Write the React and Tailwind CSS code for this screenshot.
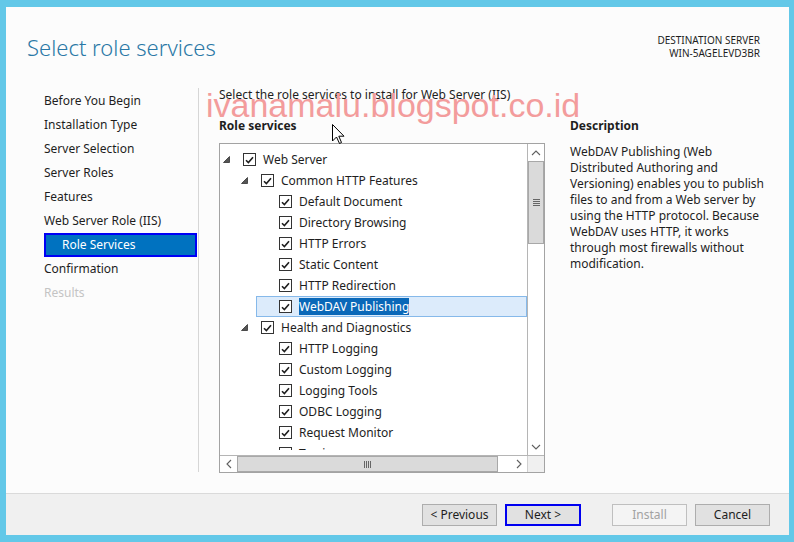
import React from "react"

const font = "font-['Segoe_UI','Noto_Sans',sans-serif]"

const navItems = [
  "Before You Begin",
  "Installation Type",
  "Server Selection",
  "Server Roles",
  "Features",
  "Web Server Role (IIS)",
  "Role Services",
  "Confirmation",
  "Results",
]

const treeRows = [
  { level: 0, label: "Web Server", expander: true },
  { level: 1, label: "Common HTTP Features", expander: true },
  { level: 2, label: "Default Document" },
  { level: 2, label: "Directory Browsing" },
  { level: 2, label: "HTTP Errors" },
  { level: 2, label: "Static Content" },
  { level: 2, label: "HTTP Redirection" },
  { level: 2, label: "WebDAV Publishing", selected: true },
  { level: 1, label: "Health and Diagnostics", expander: true },
  { level: 2, label: "HTTP Logging" },
  { level: 2, label: "Custom Logging" },
  { level: 2, label: "Logging Tools" },
  { level: 2, label: "ODBC Logging" },
  { level: 2, label: "Request Monitor" },
  { level: 2, label: "Tracing" },
]

const indent = ["ml-0", "ml-[18px]", "ml-[36px]"]

function Check() {
  return (
    <span className="w-[13px] h-[13px] border border-[#333] bg-white flex items-center justify-center shrink-0">
      <svg width="9" height="8" viewBox="0 0 9 8">
        <path d="M1 4.2 L3.4 6.6 L8 1.2" stroke="#1e1e1e" strokeWidth="1.6" fill="none" />
      </svg>
    </span>
  )
}

function Expander() {
  return (
    <svg width="7" height="7" viewBox="0 0 7 7">
      <path d="M6.5 0.5 L6.5 6.5 L0.5 6.5 Z" fill="#555" stroke="#333" strokeWidth="0.8" />
    </svg>
  )
}

function Chevron({ dir }) {
  const d = {
    up: "M1 6 L5 2 L9 6",
    down: "M1 2 L5 6 L9 2",
    left: "M6 1 L2 5 L6 9",
    right: "M2 1 L6 5 L2 9",
  }[dir]
  const vertical = dir === "up" || dir === "down"
  return (
    <svg width={vertical ? 10 : 8} height={vertical ? 8 : 10} viewBox={vertical ? "0 0 10 8" : "0 0 8 10"}>
      <path d={d} stroke="#606060" strokeWidth="1.1" fill="none" />
    </svg>
  )
}

function TreeRow({ row }) {
  return (
    <div
      className={`h-[21px] flex items-center border ${indent[row.level]} ${
        row.selected ? "border-[#86b9ea] bg-[#dcebfb]" : "border-transparent"
      }`}
    >
      <span className="w-[22px] pl-[2px] flex items-center">{row.expander && <Expander />}</span>
      <Check />
      <span className="ml-[7px] whitespace-nowrap">
        {row.selected ? <span className="bg-[#0a68b8] text-white">{row.label}</span> : row.label}
      </span>
    </div>
  )
}

export default function App() {
  return (
    <div className={`relative w-[794px] h-[542px] bg-[#63c8e8] pt-[7px] pl-[6px] pr-[5px] pb-[7px] ${font} text-[12px] text-[#1e1e1e]`}>
      <div className="h-full bg-[#fcfcfc] flex flex-col">
        {/* Header */}
        <div className="h-[79px] flex justify-between">
          <div className="pl-[21px] pt-[25px] text-[22px] font-light text-[#2a78a6] leading-[30px]">
            Select role services
          </div>
          <div className="pr-[29px] pt-[27px] text-[10px] leading-[13px] text-right">
            <div>DESTINATION SERVER</div>
            <div>WIN-5AGELEVD3BR</div>
          </div>
        </div>

        {/* Body */}
        <div className="flex-1 flex">
          <div className="w-[192px] pt-[3px]">
            {navItems.map((item) =>
              item === "Role Services" ? (
                <div
                  key={item}
                  className="ml-[38px] mr-px h-[24px] bg-[#0072c0] border-2 border-[#0000f5] text-white pl-[16px] flex items-center"
                >
                  {item}
                </div>
              ) : (
                <div
                  key={item}
                  className={`h-[24px] pl-[38px] flex items-center ${item === "Results" ? "text-[#c4c4c4]" : ""}`}
                >
                  {item}
                </div>
              )
            )}
          </div>
          <div className="w-px h-[384px] mt-[2px] bg-[#d6d6d6]" />

          <div className="pl-[20px]">
            <div className="h-[16px] leading-[16px] mt-px">Select the role services to install for Web Server (IIS)</div>
            <div className="flex mt-[15px]">
              <div className="w-[326px]">
                <div className="h-[16px] leading-[16px] font-bold">Role services</div>
                <div className="mt-[9px] border border-[#a3a3a3] bg-white flex flex-col">
                  <div className="h-[311px] flex">
                    <div className="w-[307px]">
                      <div className="h-[306px] overflow-hidden pt-[5px]">
                        {treeRows.map((row) => (
                          <TreeRow key={row.label} row={row} />
                        ))}
                      </div>
                    </div>
                    <div className="w-[17px] border-l border-[#b5b5b5] flex flex-col">
                      <div className="h-[17px] flex items-center justify-center">
                        <Chevron dir="up" />
                      </div>
                      <div className="h-[83px] bg-[#dadada] border border-[#a8a8a8] flex items-center justify-center">
                        <div className="flex flex-col gap-px">
                          <div className="w-[7px] h-px bg-[#666]" />
                          <div className="w-[7px] h-px bg-[#666]" />
                          <div className="w-[7px] h-px bg-[#666]" />
                          <div className="w-[7px] h-px bg-[#666]" />
                        </div>
                      </div>
                      <div className="flex-1" />
                      <div className="h-[17px] flex items-center justify-center">
                        <Chevron dir="down" />
                      </div>
                    </div>
                  </div>
                  <div className="h-[17px] flex border-t border-[#b5b5b5]">
                    <div className="w-[17px] flex items-center justify-center">
                      <Chevron dir="left" />
                    </div>
                    <div className="w-[261px] bg-[#dadada] border border-[#a8a8a8] flex items-center justify-center">
                      <div className="flex gap-px">
                        <div className="w-px h-[7px] bg-[#666]" />
                        <div className="w-px h-[7px] bg-[#666]" />
                        <div className="w-px h-[7px] bg-[#666]" />
                        <div className="w-px h-[7px] bg-[#666]" />
                      </div>
                    </div>
                    <div className="w-[12px]" />
                    <div className="w-[17px] flex items-center justify-center">
                      <Chevron dir="right" />
                    </div>
                    <div className="flex-1 bg-[#f0f0f0] border-l border-[#d0d0d0]" />
                  </div>
                </div>
              </div>
              <div className="ml-[25px] w-[195px]">
                <div className="h-[16px] leading-[16px] font-bold">Description</div>
                <p className="mt-[10px] leading-[16px]">
                  WebDAV Publishing (Web Distributed Authoring and Versioning) enables you to publish files to and
                  from a Web server by using the HTTP protocol. Because WebDAV uses HTTP, it works through most
                  firewalls without modification.
                </p>
              </div>
            </div>
          </div>
        </div>

        {/* Footer */}
        <div className="h-[42px] bg-[#f0f0f0] border-t border-[#dadada] flex items-center justify-end pr-[19px]">
          <button className="w-[75px] h-[22px] bg-[#e1e1e1] border border-[#adadad]">&lt; Previous</button>
          <button className="ml-[8px] w-[76px] h-[22px] bg-[#e1e1e1] border-2 border-[#0000f0]">Next &gt;</button>
          <button className="ml-[31px] w-[75px] h-[22px] bg-[#f4f4f4] border border-[#bfbfbf] text-[#a2a2a2]">
            Install
          </button>
          <button className="ml-[8px] w-[75px] h-[22px] bg-[#e1e1e1] border border-[#adadad]">Cancel</button>
        </div>
      </div>

      {/* Watermark */}
      <div className="absolute left-[206px] top-[88px] font-['Liberation_Sans',Arial,sans-serif] text-[34px] leading-[34px] text-[#f39c9c] pointer-events-none">
        ivanamalu.blogspot.co.id
      </div>

      {/* Mouse cursor */}
      <svg className="absolute left-[332px] top-[124px]" width="13" height="21" viewBox="0 0 13 21">
        <path d="M0.5 0.5 L0.5 17 L4.5 13 L7.5 19.5 L9.5 18.5 L6.8 12.2 L12 12.2 Z" fill="white" stroke="black" strokeWidth="1" />
      </svg>
    </div>
  )
}
